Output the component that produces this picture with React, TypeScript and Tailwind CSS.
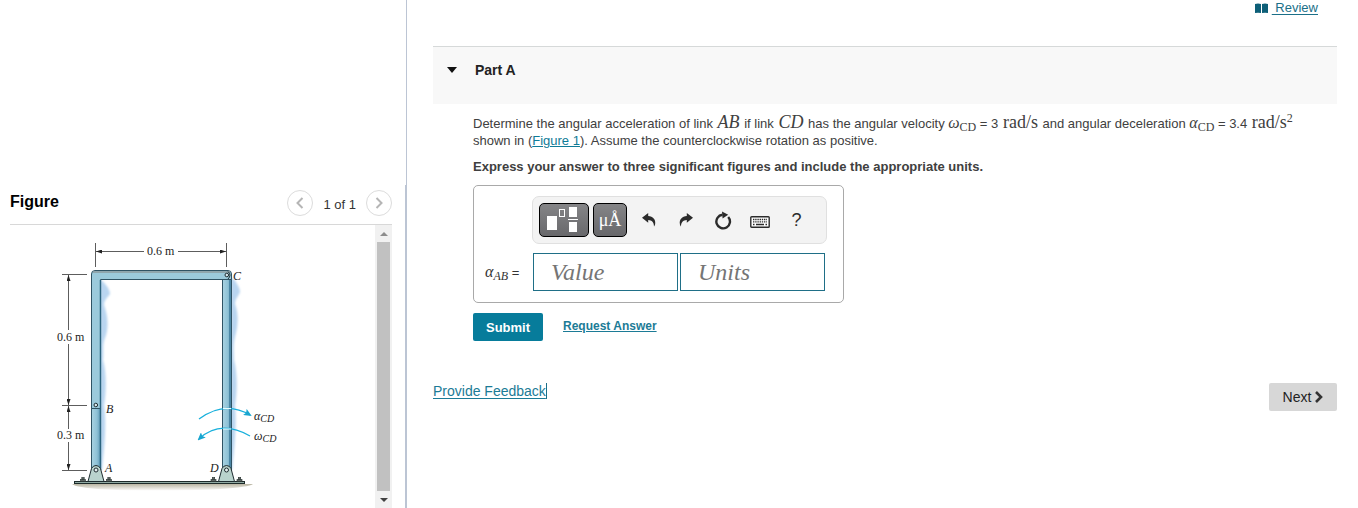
import type { ReactNode } from "react";

const serif = "font-['Liberation_Serif',serif]";

/* Inline maths set in the serif face, without stretching the line */
const MathText = ({ children }: { children: ReactNode }) => (
  <span className={`${serif} mx-px text-[18px] leading-none`}>{children}</span>
);

/* Greek letter with a subscript */
const MathSymbol = ({ letter, sub }: { letter: string; sub: ReactNode }) => (
  <span className={`${serif} text-base leading-none`}>
    <i>{letter}</i>
    <sub className="bottom-[-3px] text-xs leading-none">{sub}</sub>
  </span>
);

const Bolt = ({ x }: { x: number }) => (
  <g fill="#5d6663" stroke="#25302e" strokeWidth="0.6">
    <rect x={x - 2.5} y="479.5" width="5" height="2" />
    <rect x={x - 1.2} y="477.5" width="2.4" height="2" />
  </g>
);

const Support = ({ x }: { x: number }) => (
  <g stroke="#1f2d31" strokeWidth="1">
    <path
      d={`M${x - 8} 481.5 L${x - 4.5} 468.5 Q${x - 3} 465.5 ${x} 465.5 Q${x + 3} 465.5 ${x + 4.5} 468.5 L${x + 8} 481.5 Z`}
      fill="#b9d3cd"
    />
    <circle cx={x} cy="470" r="2" fill="#e4eeee" />
    <Bolt x={x - 13} />
    <Bolt x={x + 13} />
  </g>
);

const LinkageFigure = () => (
  <svg
    viewBox="10 225 365 283"
    className="h-[283px] w-[365px] max-w-none shrink-0"
    role="img"
    aria-label="Linkage ABCD"
  >
    <defs>
      <linearGradient id="bar" x1="0" x2="1">
        <stop offset="0" stopColor="#a9d3e2" />
        <stop offset="0.6" stopColor="#8fc2d6" />
        <stop offset="1" stopColor="#5f9ab8" />
      </linearGradient>
      <linearGradient id="ground" x1="0" x2="0" y1="0" y2="1">
        <stop offset="0" stopColor="#b9b5a2" />
        <stop offset="1" stopColor="#ffffff" />
      </linearGradient>
      <marker id="dim" viewBox="0 0 6 4" refX="6" refY="2" markerWidth="6" markerHeight="4" markerUnits="userSpaceOnUse" orient="auto-start-reverse">
        <path d="M0 0 L6 2 L0 4 Z" fill="#222" />
      </marker>
      <marker id="turn" viewBox="0 0 8 7" refX="6" refY="3.5" markerWidth="8" markerHeight="7" markerUnits="userSpaceOnUse" orient="auto">
        <path d="M0 0 L8 3.5 L0 7 L1.5 3.5 Z" fill="#18a5cf" />
      </marker>
      <filter id="soft">
        <feGaussianBlur stdDeviation="0.8" />
      </filter>
    </defs>

    {/* Soft shading beside the links */}
    <g fill="#b9d5f0" filter="url(#soft)">
      <path d="M101 280 C105 283 110 289 110 294 C107 298 104 300 104 305 C108 316 109 328 105 338 C102 345 104 352 103 360 C107 374 106 395 104 405 C107 425 104 448 102 470 L100 470 V280 Z" />
      <path d="M231 276 C236 281 240 288 240 292 C238 297 235 299 235 304 C239 314 238 327 235 337 C233 345 234 352 234 360 C238 375 237 395 235 405 C237 425 234 452 232 470 L230 470 Z" />
    </g>

    {/* Ground */}
    <path d="M72 484 H253 C246 492 82 494 72 484 Z" fill="url(#ground)" />
    <rect x="74.5" y="481.5" width="170" height="2" fill="#8fa9a2" stroke="#1d2b2a" strokeWidth="1" />

    {/* Links */}
    <rect x="222.5" y="276" width="9" height="194" fill="url(#bar)" stroke="#2f5364" />
    <path d="M230 280 V469" stroke="#4b87a5" strokeWidth="2" />
    <rect x="91.5" y="407" width="9" height="63" fill="url(#bar)" stroke="#2f5364" />
    <path
      d="M91.5 408.5 V274 Q91.5 270.5 95 270.5 H228 Q231.5 270.5 231.5 274 V279.5 H100.5 V408.5 Z"
      fill="#9bcadb"
      stroke="#2f5364"
    />
    <path d="M93 272 H230" stroke="#8b9a9e" strokeWidth="1.5" />
    <path d="M100.5 280 V470" stroke="#2b647f" strokeWidth="1.5" />
    <g fill="#d9e9ee" stroke="#1f2d31">
      <circle cx="95.8" cy="405" r="1.8" />
      <circle cx="226.8" cy="275" r="1.8" />
      <path d="M228 271.5 Q232 275 228 279" fill="none" />
    </g>
    <Support x={96} />
    <Support x={226.5} />

    {/* Dimension lines */}
    <g stroke="#333" strokeWidth="0.8" fill="none">
      <path d="M95.5 243 V267 M226.5 243 V267 M62 274.5 H87 M62 405.5 H87 M62 470.5 H87" />
      <path d="M144 251.5 H96" markerEnd="url(#dim)" />
      <path d="M178 251.5 H226" markerEnd="url(#dim)" />
      <path d="M68.5 330 V275" markerEnd="url(#dim)" />
      <path d="M68.5 344 V405" markerEnd="url(#dim)" />
      <path d="M68.5 429 V406" markerEnd="url(#dim)" />
      <path d="M68.5 442 V470" markerEnd="url(#dim)" />
    </g>

    {/* Rotation arrows */}
    <g stroke="#18b0dc" strokeWidth="1.3" fill="none">
      <path d="M199 419 Q225 400 250 415" markerEnd="url(#turn)" />
      <path d="M250 436 Q220 419 199 439" markerEnd="url(#turn)" />
    </g>
    <path d="M223 408.5 H231 M223 429 H231" stroke="#e6fbff" strokeWidth="1" />

    <g className={serif} fill="#222" fontSize="12">
      <text x="147" y="255">0.6 m</text>
      <text x="57" y="341">0.6 m</text>
      <text x="57" y="439">0.3 m</text>
      <g fontStyle="italic">
        <text x="233" y="280">C</text>
        <text x="106" y="413">B</text>
        <text x="105" y="472">A</text>
        <text x="210" y="472">D</text>
        <text x="254" y="420">α<tspan fontSize="10" dy="2">CD</tspan></text>
        <text x="254" y="440">ω<tspan fontSize="10" dy="2">CD</tspan></text>
      </g>
    </g>
  </svg>
);

const UndoIcon = ({ className = "" }: { className?: string }) => (
  <svg viewBox="0 0 14 14" className={`size-[14px] ${className}`} fill="#2b2b2b" aria-hidden="true">
    <path d="M0 4.8 L6.2 0 V2.9 C11 3.1 13.8 6.5 13.2 10.5 C13.1 11.8 12.6 12.9 12 13.6 C12 9.6 10 7.3 6.2 7.1 V9.8 Z" />
  </svg>
);

const ResetIcon = () => (
  <svg viewBox="0 0 18 19" className="h-[19px] w-[18px]" aria-hidden="true">
    <path d="M8.5 3.8 A6.8 6.8 0 1 0 14.2 6" fill="none" stroke="#2b2b2b" strokeWidth="2.4" />
    <path d="M8 0.4 L14.2 3.8 L8.6 7.6 Z" fill="#2b2b2b" />
  </svg>
);

const KeyboardIcon = () => (
  <svg viewBox="0 0 20 12" className="h-3 w-5" aria-hidden="true">
    <rect x="0.8" y="0.8" width="18.4" height="10.4" rx="0.8" fill="#fff" stroke="#2b2b2b" strokeWidth="1.4" />
    <path d="M3 3.5 H17 M3 5.8 H17" stroke="#2b2b2b" strokeWidth="1.3" strokeDasharray="1.4 0.8" />
    <path d="M3 8.5 H4.5 M6 8.5 H14 M15.5 8.5 H17" stroke="#2b2b2b" strokeWidth="1.3" />
  </svg>
);

const TemplateIcon = () => (
  <svg viewBox="0 0 34 26" className="h-[26px] w-[34px]" fill="#fff" aria-hidden="true">
    <rect x="0" y="9" width="10" height="14" />
    <rect x="12.5" y="2.5" width="5" height="7" fill="none" stroke="#fff" />
    <rect x="22" y="0" width="8" height="10" />
    <rect x="21" y="12" width="10" height="1" />
    <rect x="22" y="15" width="8" height="10" />
  </svg>
);

const PagerButton = ({ label, d }: { label: string; d: string }) => (
  <button
    type="button"
    aria-label={label}
    className="flex size-[26px] items-center justify-center rounded-full border border-[#dcdcdc] bg-white"
  >
    <svg viewBox="0 0 10 12" className="h-3 w-2.5" fill="none" stroke="#b5b5b5" strokeWidth="2" aria-hidden="true">
      <path d={d} />
    </svg>
  </button>
);

const FigurePanel = () => (
  <aside className="flex w-[407px] shrink-0 flex-col border-r border-[#bcc5d4] pt-[185px]">
    <div className="flex flex-1 flex-col border-r border-[#bcc5d4] pr-[13px] pl-2.5">
      <div className="flex h-10 items-center justify-between border-b border-[#d8d8d8]">
        <h2 className="pb-1.5 text-base font-bold text-black">Figure</h2>
        <div className="flex items-center gap-2.5 pb-1 text-[13px] text-[#333]">
          <PagerButton label="Previous figure" d="M7.5 1 L2.5 6 L7.5 11" />
          <span className="pt-1">1 of 1</span>
          <PagerButton label="Next figure" d="M2.5 1 L7.5 6 L2.5 11" />
        </div>
      </div>
      <div className="flex flex-1">
        <div className="min-w-0 flex-1">
          <LinkageFigure />
        </div>
        {/* Scroll bar */}
        <div className="flex w-[17px] shrink-0 flex-col items-center bg-[#f1f1f1]">
          <span className="flex h-[17px] items-center">
            <svg viewBox="0 0 8 4" className="h-1 w-2" aria-hidden="true">
              <path d="M0 4 L4 0 L8 4 Z" fill="#8c8c8c" />
            </svg>
          </span>
          <span className="w-[13px] flex-1 bg-[#c1c1c1]" />
          <span className="flex h-[17px] items-center">
            <svg viewBox="0 0 8 4" className="h-1 w-2" aria-hidden="true">
              <path d="M0 0 L4 4 L8 0 Z" fill="#404040" />
            </svg>
          </span>
        </div>
      </div>
    </div>
  </aside>
);

const darkButton =
  "flex h-[34px] items-center justify-center rounded-[5px] border border-black bg-linear-to-b from-[#858587] to-[#68686b]";
const answerInput = `${serif} h-[38px] w-[145px] border border-[#1f6f87] bg-white px-[17px] text-2xl text-[#333] italic placeholder:text-[#757575]`;

const AnswerBox = () => (
  <div className="mt-[10px] w-[371px] rounded-[5px] border border-[#a9a9a9] pt-2.5 pr-4 pb-[11px] pl-[11px]">
    <div className="ml-[47px] flex h-12 items-center rounded-[7px] border border-[#e0e0e0] bg-[#f3f3f3] pl-1.5">
      <button type="button" aria-label="Templates" className={`${darkButton} w-[50px]`}>
        <TemplateIcon />
      </button>
      <button type="button" aria-label="Symbols" className={`${darkButton} ${serif} ml-1 w-[34px] text-lg text-white`}>
        μÅ
      </button>
      <div className="ml-[3px] grid grid-cols-[repeat(5,37px)] items-center justify-items-center">
        <button type="button" aria-label="Undo">
          <UndoIcon />
        </button>
        <button type="button" aria-label="Redo">
          <UndoIcon className="-scale-x-100" />
        </button>
        <button type="button" aria-label="Reset">
          <ResetIcon />
        </button>
        <button type="button" aria-label="Keyboard" className="pt-1">
          <KeyboardIcon />
        </button>
        <button type="button" aria-label="Help" className="text-lg leading-none text-[#2b2b2b]">
          ?
        </button>
      </div>
    </div>
    <div className="mt-[9px] flex items-center">
      <label htmlFor="value" className="w-12 shrink-0 text-[13px] whitespace-nowrap text-[#333]">
        <MathSymbol letter="α" sub={<i>AB</i>} /> =
      </label>
      <input id="value" placeholder="Value" className={answerInput} />
      <input aria-label="Units" placeholder="Units" className={`${answerInput} ml-0.5`} />
    </div>
  </div>
);

const App = () => {
  return (
    <div className="flex min-h-screen bg-white font-['Liberation_Sans',Arial,sans-serif]">
      <FigurePanel />

      <main className="min-w-0 flex-1 pr-[21px] pl-[26px]">
        <div className="flex h-[46px] justify-end pr-[19px]">
          <a href="#review" className="flex h-4 items-center gap-1 text-[13px] text-[#1b6f88]">
            <svg viewBox="0 0 13 11" className="h-[11px] w-[13px]" fill="#0d5f78" aria-hidden="true">
              <path d="M0 1 Q3 0 6 1 V10 Q3 9.4 0 10 Z M7 1 Q10 0 13 1 V10 Q10 9.4 7 10 Z" />
            </svg>
            <span className="whitespace-pre underline underline-offset-2"> Review</span>
          </a>
        </div>

        {/* Part header */}
        <header className="flex h-[58px] border-t border-[#d6d9d9] bg-[#f8f8f8] pt-[13px] pl-3.5">
          <h3>
            <button type="button" className="flex items-center gap-[18px] text-sm font-bold text-[#222]">
              <svg viewBox="0 0 10 6" className="h-1.5 w-2.5" aria-hidden="true">
                <path d="M0 0 H10 L5 6 Z" fill="#111" />
              </svg>
              Part A
            </button>
          </h3>
        </header>

        <section className="pt-[9px] pl-10 text-[13px] leading-[17px] text-[#404040]">
          <p className="pr-5">
            Determine the angular acceleration of link{" "}
            <MathText>
              <i>AB</i>
            </MathText>{" "}
            if link{" "}
            <MathText>
              <i>CD</i>
            </MathText>{" "}
            has the angular velocity <MathSymbol letter="ω" sub="CD" /> = 3 <MathText>rad/s</MathText> and
            angular deceleration <MathSymbol letter="α" sub="CD" /> = 3.4{" "}
            <MathText>
              rad/s<sup className="text-xs leading-none">2</sup>
            </MathText>{" "}
            shown in (
            <a href="#figure" className="text-[#0f7b97] underline">
              Figure 1
            </a>
            ). Assume the counterclockwise rotation as positive.
          </p>
          <p className="mt-[9px] font-bold">
            Express your answer to three significant figures and include the appropriate units.
          </p>
          <AnswerBox />
          <div className="mt-2.5 flex items-center gap-5">
            <button type="button" className="h-7 w-[70px] rounded-xs bg-[#077c9b] text-[13px] font-bold text-white">
              Submit
            </button>
            <a href="#answer" className="pb-0.5 text-xs font-bold text-[#1c7b96] underline">
              Request Answer
            </a>
          </div>
        </section>

        <footer className="mt-[42px] flex items-start justify-between">
          <a href="#feedback" className="border-r border-[#1b6f88] text-sm leading-4 text-[#1b7b96] underline underline-offset-2">
            Provide Feedback
          </a>
          <button type="button" className="flex h-7 w-[68px] items-center justify-center gap-1 rounded-xs bg-[#d7d7d7] text-sm text-[#222]">
            Next
            <svg viewBox="0 0 8 12" className="h-3 w-2" fill="none" stroke="#333" strokeWidth="2.6" aria-hidden="true">
              <path d="M1 1 L6 6 L1 11" />
            </svg>
          </button>
        </footer>
      </main>
    </div>
  );
};

export default App;
